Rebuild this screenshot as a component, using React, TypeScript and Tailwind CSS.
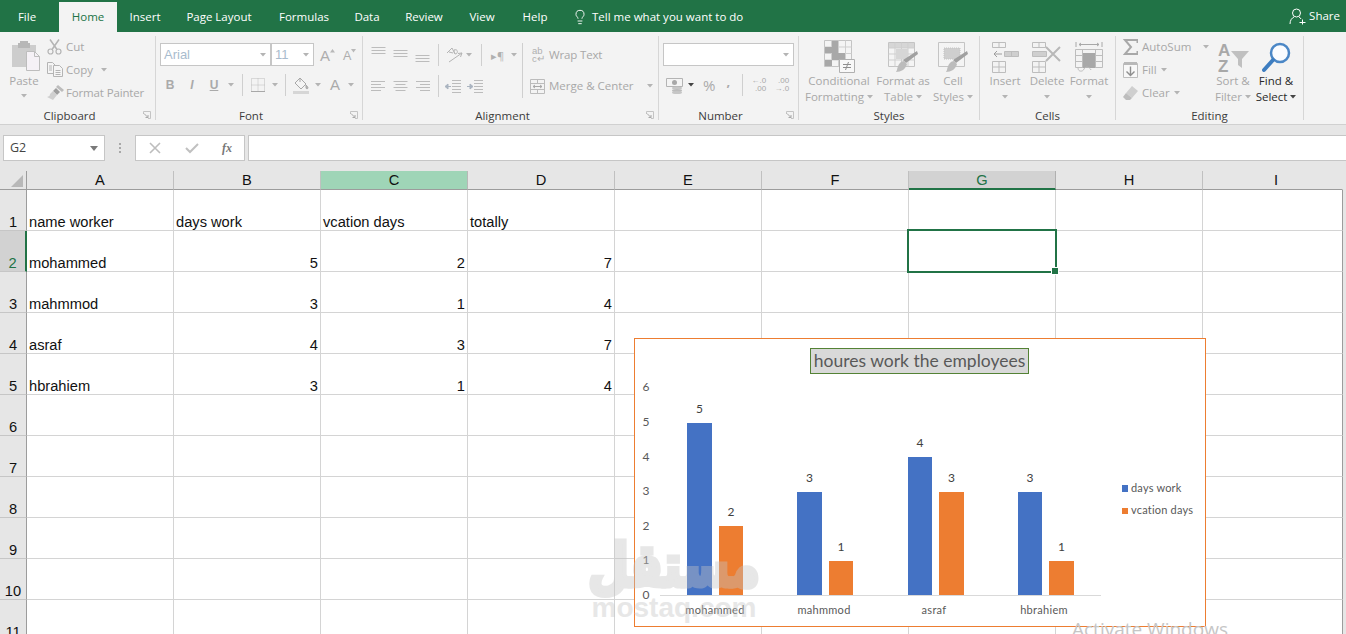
import React from "react";
import { Lightbulb } from "lucide-react";

const COLS = ["A", "B", "C", "D", "E", "F", "G", "H", "I"];
const ROWS: (string | number)[][] = [
  ["name worker", "days work", "vcation days", "totally"],
  ["mohammed", 5, 2, 7],
  ["mahmmod", 3, 1, 4],
  ["asraf", 4, 3, 7],
  ["hbrahiem", 3, 1, 4],
  [],
  [],
  [],
  [],
  [],
  [],
];
const TABS = [
  { label: "File", w: "w-[59px] pr-[5px]" },
  { label: "Home", w: "w-[58px]" },
  { label: "Insert", w: "w-[56px]" },
  { label: "Page Layout", w: "w-[92px]" },
  { label: "Formulas", w: "w-[78px]" },
  { label: "Data", w: "w-[48px]" },
  { label: "Review", w: "w-[66px]" },
  { label: "View", w: "w-[50px]" },
  { label: "Help", w: "w-[56px]" },
];
const G = "#bcbcbc";

function Caret({ dark }: { dark?: boolean }) {
  return (
    <svg width="6" height="4" viewBox="0 0 6 4" className="shrink-0">
      <path d="M0 0h6L3 3.5z" fill={dark ? "#444" : "#b4b4b4"} />
    </svg>
  );
}

function Sep({ h = "h-[22px]" }: { h?: string }) {
  return <div className={`w-px bg-[#cfcfcf] shrink-0 ${h}`} />;
}

function Launcher() {
  return (
    <svg width="8" height="8" viewBox="0 0 8 8" className="absolute right-[4px] top-[1px]">
      <path d="M.5 3V.5H7.5V7.5H5" fill="none" stroke="#c4c4c4" />
      <path d="M1 2.5 5 6.5M5 4v2.5H2.5" fill="none" stroke="#a8a8a8" />
    </svg>
  );
}

function Group({ w, label, launcher, children }: { w: string; label: string; launcher?: boolean; children: React.ReactNode }) {
  return (
    <div className={`${w} shrink-0 h-[84px] mt-[4px] border-r border-[#d6d6d6] flex flex-col`}>
      <div className="h-[73px] shrink-0">{children}</div>
      <div className={`relative h-[12px] shrink-0 mt-px flex items-center justify-center text-[11.5px] leading-[12px] text-[#3c3c3c] ${launcher ? "pr-[16px]" : ""}`}>
        {label}
        {launcher && <Launcher />}
      </div>
    </div>
  );
}

function Lines({ y, w }: { y: number[]; w: number[] }) {
  return (
    <svg width="15" height="16" viewBox="0 0 15 16" className="shrink-0">
      {y.map((v, i) => (
        <path key={i} d={`M${(15 - w[i]) / 2} ${v + 0.5}h${w[i]}`} stroke={G} />
      ))}
    </svg>
  );
}

function AlignLines({ kind }: { kind: "l" | "c" | "r" }) {
  const ws = [14, 10, 14, 10];
  return (
    <svg width="15" height="14" viewBox="0 0 15 14" className="shrink-0">
      {ws.map((n, i) => {
        const x = kind === "l" ? 0 : kind === "c" ? (15 - n) / 2 : 15 - n;
        return <path key={i} d={`M${x} ${2.5 + i * 3}h${n}`} stroke={G} />;
      })}
    </svg>
  );
}

function Indent({ flip }: { flip?: boolean }) {
  return (
    <svg width="16" height="14" viewBox="0 0 16 14" className="shrink-0">
      <path d="M7 1.500h9M7 4.500h9M7 7.500h9M7 10.500h9M7 13.500h9" stroke={G} />
      {flip ? <path d="M0 7.500h3V5l3 2.500L3 10V7.500" fill="#aab4c0" stroke="#aab4c0" /> : <path d="M6 7.500H3V5L0 7.500 3 10V7.500" fill="#aab4c0" stroke="#aab4c0" />}
    </svg>
  );
}

function PasteIcon() {
  return (
    <svg width="29" height="31" viewBox="0 0 29 31">
      <path d="M1 5h24v22H1z" fill="#cdcdcd" />
      <path d="M9 3h8V1h-8zM7 3h12v5H7z" fill="#b7b7b7" />
      <path d="M15.500 11.500h8l5 5v14h-13z" fill="#f5f1f6" stroke="#bdbdbd" />
      <path d="M23.500 11.500v5h5" fill="none" stroke="#bdbdbd" />
    </svg>
  );
}

function CutIcon() {
  return (
    <svg width="15" height="16" viewBox="0 0 15 16" fill="none" stroke="#b4b4b4" strokeWidth="1.2">
      <circle cx="3.500" cy="12.500" r="2.500" />
      <circle cx="11.500" cy="12.500" r="2.500" />
      <path d="M5 10.500 12 .5M10 10.500 3 .5" strokeWidth="1.500" />
    </svg>
  );
}

function CopyIcon() {
  return (
    <svg width="16" height="15" viewBox="0 0 16 15" fill="#f5f5f5" stroke="#b4b4b4">
      <path d="M.5.500h5l3 3v8h-8z" />
      <path d="M6.500 3.500h6l3 3v8h-9z" />
      <path d="M2 4h3M2 6h3M2 8h3M8.500 8.500h5M8.500 10.500h5M8.500 12.500h5" />
    </svg>
  );
}

function PainterIcon() {
  return (
    <svg width="17" height="15" viewBox="0 0 17 15">
      <path d="M11 0l6 5-2 2-6-5z" fill="#bcbcbc" />
      <path d="M9 3l4 4-3 3-4-4z" fill="#9e9e9e" />
      <path d="M6 6l4 4-4 5-6-3c2-1 3-1 3-3z" fill="#cfcfcf" />
    </svg>
  );
}

function BigA({ up }: { up: boolean }) {
  return (
    <span className="relative flex items-end h-[16px]">
      <span className={`font-['Liberation_Sans',sans-serif] ${up ? "text-[15px]" : "text-[12.5px]"} leading-[14px] text-[#adadad]`}>A</span>
      <svg width="6" height="4" viewBox="0 0 6 4" className="mb-[10px]">
        <path d={up ? "M0 3.500h5L2.500 0z" : "M0 0h5L2.500 3.500z"} fill="#b8b8b8" />
      </svg>
    </span>
  );
}

function InputBox({ w, text }: { w: string; text?: string }) {
  return (
    <div className={`${w} h-[23px] bg-white border border-[#c6c6c6] flex items-center justify-between pl-[3px] pr-[4px] shrink-0`}>
      <span className="font-['Liberation_Sans',sans-serif] text-[13px] text-[#a8bbcd]">{text}</span>
      <Caret />
    </div>
  );
}

function GridIcon() {
  return (
    <svg width="14" height="14" viewBox="0 0 14 14" fill="none">
      <path d="M.5.500h13v13H.5zM7 .5v13M.5 7h13" stroke="#bdbdbd" strokeDasharray="1 1" />
      <path d="M0 13.500h14" stroke="#a8a8a8" />
    </svg>
  );
}

function FillIcon() {
  return (
    <svg width="16" height="17" viewBox="0 0 16 17">
      <path d="M7 1l6 6-5 5-6-6z" fill="#f4f4f4" stroke="#a8a8a8" />
      <path d="M7 1v4M13 8c1 1 2 2 2 3s-2 1-2 0z" stroke="#a8a8a8" fill="#b4b4b4" />
      <path d="M0 14h16v3H0z" fill="#d6d6d6" />
    </svg>
  );
}

function OrientIcon() {
  return (
    <svg width="17" height="16" viewBox="0 0 17 16" fill="none" stroke="#b4b4b4">
      <path d="M1 6l5-5 3 6M3 5l4 1" />
      <path d="M8 3c3-1 4 1 3 3s-3 1-3-3M3 15 16 6M16 6l-4 .5M16 6l-1.500 4" />
    </svg>
  );
}

function WrapIcon() {
  return (
    <span className="w-[13px] text-[9.5px] leading-[8px] text-[#b0b0b0] font-['Liberation_Sans',sans-serif] flex flex-col">
      <span>ab</span>
      <span>c↵</span>
    </span>
  );
}

function MergeIcon() {
  return (
    <svg width="15" height="15" viewBox="0 0 15 15" fill="none" stroke="#bcbcbc">
      <path d="M.5.500h14v14H.5zM.5 4.500h14M.5 10.500h14M7.500.5v4M7.500 10.500v4" />
      <path d="M3 7.500h9M3 7.500l2-1.500M3 7.500 5 9M12 7.500 10 6M12 7.500 10 9" stroke="#a8a8a8" />
    </svg>
  );
}

function MoneyIcon() {
  return (
    <svg width="18" height="17" viewBox="0 0 18 17">
      <path d="M.5 1.500h16v8H.5z" fill="#f4f4f4" stroke="#b4b4b4" />
      <circle cx="8.500" cy="5.500" r="2.500" fill="#a8a8a8" />
      <ellipse cx="11" cy="11" rx="5" ry="1.500" fill="#c6c6c6" />
      <ellipse cx="11" cy="13.500" rx="5" ry="1.500" fill="#bbb" />
      <ellipse cx="11" cy="15.500" rx="5" ry="1.500" fill="#c6c6c6" />
    </svg>
  );
}

function DecimalIcon({ inc }: { inc: boolean }) {
  return (
    <span className="relative flex w-[16px] flex-col items-end text-[8px] leading-[8px] text-[#a8a8a8] font-['Liberation_Sans',sans-serif]">
      <span>{inc ? "←.0" : ".00"}</span>
      <span>{inc ? ".00" : "→.0"}</span>
    </span>
  );
}

function CondIcon() {
  return (
    <svg width="31" height="33" viewBox="0 0 31 33" fill="none">
      <path d="M.5.500h27v26H.5z" fill="#f4f4f4" stroke="#c4c4c4" />
      <path d="M7.500.5v26M14.500.5v26M21.500.5v26M.5 7h27M.5 13.500h27M.5 20h27" stroke="#cfcfcf" />
      <path d="M8 1h6v6H8zM1 7h13v6H1zM8 13h13v7H8zM1 20h7v6H1z" fill="#a8a8a8" />
      <path d="M15.500 19.500h15v13h-15z" fill="#f8f8f8" stroke="#b0b0b0" />
      <path d="M19 24.500h8M19 27.500h8M24.500 22l-3 8" stroke="#8e8e8e" />
    </svg>
  );
}

function TableBrushIcon({ header }: { header?: boolean }) {
  return (
    <svg width="30" height="31" viewBox="0 0 30 31" fill="none">
      <path d="M.5.500h26v24H.5z" fill="#f4f4f4" stroke="#c4c4c4" />
      {header ? (
        <path d="M6 6h16v11H6z" fill="#cfcfcf" stroke="#c4c4c4" strokeDasharray="1 1" />
      ) : (
        <>
          <path d="M1 1h25v5H1z" fill="#d6d6d6" />
          <path d="M7 .5v24M13.500.5v24M20 .5v24M.5 6h26M.5 12h26M.5 18h26" stroke="#cfcfcf" />
          <path d="M8 7h12v10H8z" fill="#d6d6d6" />
        </>
      )}
      <path d="M29 9l1 3-12 9-3-3z" fill="#a0a0a0" />
      <path d="M16 19c-3 0-6 3-7 9l-1 2c5 0 10-3 11-8z" fill="#bcbcbc" />
    </svg>
  );
}

function InsertIcon() {
  return (
    <svg width="27" height="31" viewBox="0 0 27 31" fill="none" stroke="#bdbdbd">
      <path d="M.5.500h13v5H.5zM7 .5v5M.5 19.500h13v11H.5zM7 19.500v11M.5 25h13" />
      <path d="M12.500 9.500h14v5h-14zM19.500 9.500v5" fill="#cfcfcf" />
      <path d="M2 12h8M2 12l3-3M2 12l3 3" stroke="#9e9e9e" />
    </svg>
  );
}

function DeleteIcon() {
  return (
    <svg width="30" height="31" viewBox="0 0 30 31" fill="none" stroke="#bdbdbd">
      <path d="M.5.500h13v5H.5zM7 .5v5M.5 19.500h13v11H.5zM7 19.500v11M.5 25h13" />
      <path d="M.5 9.500h14v5H.5z" fill="#cfcfcf" />
      <path d="M14 5l14 14M28 5 14 19" strokeWidth="2" stroke="#b8b8b8" />
    </svg>
  );
}

function FormatIcon() {
  return (
    <svg width="28" height="32" viewBox="0 0 28 32" fill="none" stroke="#bdbdbd">
      <path d="M1 1v5M27 1v5M4 3.500h20M4 3.500l2-1.500M4 3.500 6 5M24 3.500 22 2M24 3.500 22 5" stroke="#a8a8a8" />
      <path d="M.5 8.500h27v18H.5zM7.500 8.500v18M20.500 8.500v18M.5 14.500h27M.5 20.500h27" />
      <path d="M8 12h12v15H8z" fill="#a8a8a8" stroke="none" />
      <path d="M3 27c0 4 5 4 6 1s6-2 7 1" />
    </svg>
  );
}

function SigmaIcon() {
  return (
    <svg width="15" height="16" viewBox="0 0 15 16" fill="none">
      <path d="M14.500 4V1H2l6 7-6 7h12.500v-3" stroke="#a8a8a8" strokeWidth="2" />
    </svg>
  );
}

function FillDownIcon() {
  return (
    <svg width="15" height="17" viewBox="0 0 15 17" fill="none">
      <path d="M.5 2.500h14v14H.5z" fill="#f8f8f8" stroke="#bdbdbd" />
      <path d="M1 1h13v3H1z" fill="#b8b8b8" />
      <path d="M7.500 5.500v9M3.500 10.500l4 4 4-4" stroke="#8f8f8f" strokeWidth="1.400" />
    </svg>
  );
}

function EraserIcon() {
  return (
    <svg width="15" height="14" viewBox="0 0 15 14">
      <path d="M9 0l6 5-6 7-6-5z" fill="#cfcfcf" />
      <path d="M3 7l6 5-2 2H3L0 11z" fill="#bdbdbd" />
    </svg>
  );
}

function SortIcon() {
  return (
    <svg width="31" height="31" viewBox="0 0 31 31">
      <text x="0" y="14" fontSize="17" fontWeight="700" fill="#a8a8a8" className="font-['Liberation_Sans',sans-serif]">A</text>
      <text x="0" y="30" fontSize="17" fontWeight="700" fill="#a8a8a8" className="font-['Liberation_Sans',sans-serif]">Z</text>
      <path d="M13 9h18l-7 8v9l-4-3v-6z" fill="#c0c0c0" />
    </svg>
  );
}

function FindIcon() {
  return (
    <svg width="29" height="31" viewBox="0 0 29 31" fill="none">
      <circle cx="18" cy="11" r="9" stroke="#4b87c6" strokeWidth="2.500" fill="#fafcff" />
      <path d="M11 18 2 28" stroke="#3d7dc0" strokeWidth="4" strokeLinecap="round" />
    </svg>
  );
}

function ShareIcon() {
  return (
    <svg width="17" height="17" viewBox="0 0 17 17" fill="none" stroke="white">
      <circle cx="7.500" cy="5" r="4" />
      <path d="M1 16c0-4 2-6 4-7M10 9c1 .5 1.500 1 2 2M10.500 14.500h6M13.500 11.500v5" />
    </svg>
  );
}

function BigButton({ w, icon, lines, caretLine, dark }: { w: string; icon: React.ReactNode; lines: string[]; caretLine?: boolean; dark?: boolean }) {
  return (
    <div className={`${w} shrink-0 flex flex-col items-center leading-[16px] text-[11.5px] ${dark ? "text-[#2a2a2a]" : "text-[#a8a8a8]"}`}>
      <div className="h-[37px] flex items-end justify-center">{icon}</div>
      {lines.map((t, i) => (
        <div key={t} className="flex items-center gap-[3px] whitespace-nowrap">
          {t}
          {caretLine && i === lines.length - 1 && <Caret dark={dark} />}
        </div>
      ))}
      {!caretLine && (
        <div className="h-[16px] flex items-center">
          <Caret />
        </div>
      )}
    </div>
  );
}

function Ribbon() {
  return (
    <div className="h-[93px] bg-[#f3f3f3] border-b border-[#d0d0d0] flex shrink-0">
      <Group w="w-[156px]" label="Clipboard" launcher>
        <div className="flex pl-[8px] text-[11.5px] text-[#a8a8a8]">
          <div className="w-[32px] flex flex-col items-center">
            <div className="pt-[4px] pl-[2px]">
              <PasteIcon />
            </div>
            <div className="leading-[16px] mt-[2px]">Paste</div>
            <div className="h-[14px] flex items-center">
              <Caret />
            </div>
          </div>
          <div className="ml-[7px] flex flex-col -mt-px">
            <div className="h-[23px] flex items-center gap-[3px]">
              <span className="w-[16px]"><CutIcon /></span>Cut
            </div>
            <div className="h-[23px] flex items-center gap-[3px]">
              <span className="w-[16px]"><CopyIcon /></span>Copy<span className="ml-[5px]"><Caret /></span>
            </div>
            <div className="h-[23px] flex items-center gap-[3px] whitespace-nowrap tracking-[-0.15px]">
              <span className="w-[16px]"><PainterIcon /></span>Format Painter
            </div>
          </div>
        </div>
      </Group>

      <Group w="w-[207px]" label="Font" launcher>
        <div className="pl-[4px] pt-[7px]">
          <div className="flex items-center">
            <InputBox w="w-[111px]" text="Arial" />
            <InputBox w="w-[43px]" text="11" />
            <span className="ml-[6px] w-[23px]"><BigA up /></span>
            <BigA up={false} />
          </div>
          <div className="flex items-center h-[22px] mt-[8px] text-[#aaa] font-['Liberation_Sans',sans-serif]">
            <span className="w-[20px] text-center text-[12px] font-bold">B</span>
            <span className="w-[24px] text-center text-[12px] italic font-bold">I</span>
            <span className="w-[20px] text-center text-[12px] underline font-bold">U</span>
            <span className="w-[13px] flex justify-center"><Caret /></span>
            <span className="ml-[5px]"><Sep /></span>
            <span className="ml-[8px]"><GridIcon /></span>
            <span className="w-[20px] flex justify-center"><Caret /></span>
            <Sep />
            <span className="ml-[7px]"><FillIcon /></span>
            <span className="w-[17px] flex justify-center"><Caret /></span>
            <span className="w-[18px] text-center text-[15px]">A</span>
            <span className="w-[14px] flex justify-center"><Caret /></span>
          </div>
        </div>
      </Group>

      <Group w="w-[296px]" label="Alignment" launcher>
        <div className="flex pl-[8px] pt-[7px] text-[11.5px] text-[#a8a8a8]">
          <div className="w-[151px] shrink-0 flex flex-col gap-[8px]">
            <div className="flex items-center h-[24px]">
              <Lines y={[0, 3, 6]} w={[14, 14, 14]} />
              <span className="ml-[7px]"><Lines y={[3, 6, 9]} w={[14, 14, 14]} /></span>
              <span className="ml-[7px]"><Lines y={[8, 11, 14]} w={[14, 14, 14]} /></span>
              <span className="ml-[8px]"><Sep /></span>
              <span className="ml-[7px]"><OrientIcon /></span>
              <span className="ml-[3px]"><Caret /></span>
              <span className="ml-[9px]"><Sep /></span>
              <span className="ml-[9px] text-[11px] leading-none text-[#b0b0b0]">▸¶</span>
              <span className="ml-[7px]"><Caret /></span>
            </div>
            <div className="flex items-center h-[22px]">
              <AlignLines kind="l" />
              <span className="ml-[7px]"><AlignLines kind="c" /></span>
              <span className="ml-[7px]"><AlignLines kind="r" /></span>
              <span className="ml-[8px]"><Sep /></span>
              <span className="ml-[6px]"><Indent /></span>
              <span className="ml-[6px]"><Indent flip /></span>
            </div>
          </div>
          <Sep h="h-[55px]" />
          <div className="ml-[7px] flex flex-col gap-[8px]">
            <div className="flex items-center h-[24px] pl-[2px] gap-[4px] tracking-[-0.15px]"><WrapIcon />Wrap Text</div>
            <div className="flex items-center h-[22px] gap-[4px] whitespace-nowrap">
              <MergeIcon />Merge &amp; Center<span className="ml-[9px]"><Caret /></span>
            </div>
          </div>
        </div>
      </Group>

      <Group w="w-[140px]" label="Number" launcher>
        <div className="pl-[4px] pt-[7px]">
          <InputBox w="w-[131px]" />
          <div className="flex items-center h-[22px] mt-[8px] text-[#aaa]">
            <span className="ml-[3px]"><MoneyIcon /></span>
            <span className="ml-[4px]"><Caret dark /></span>
            <span className="ml-[9px] text-[15px] leading-none">%</span>
            <span className="ml-[11px] mb-[8px] text-[13px] font-bold leading-none">,</span>
            <span className="ml-[12px]"><Sep /></span>
            <span className="ml-[7px]"><DecimalIcon inc /></span>
            <span className="ml-[7px]"><DecimalIcon inc={false} /></span>
          </div>
        </div>
      </Group>

      <Group w="w-[181px]" label="Styles">
        <div className="flex pl-px">
          <BigButton w="w-[78px]" icon={<CondIcon />} lines={["Conditional", "Formatting"]} caretLine />
          <BigButton w="w-[50px]" icon={<TableBrushIcon />} lines={["Format as", "Table"]} caretLine />
          <BigButton w="w-[50px]" icon={<TableBrushIcon header />} lines={["Cell", "Styles"]} caretLine />
        </div>
      </Group>

      <Group w="w-[136px]" label="Cells">
        <div className="flex pl-[4px]">
          <BigButton w="w-[42px]" icon={<InsertIcon />} lines={["Insert"]} />
          <BigButton w="w-[42px]" icon={<DeleteIcon />} lines={["Delete"]} />
          <BigButton w="w-[42px]" icon={<FormatIcon />} lines={["Format"]} />
        </div>
      </Group>

      <Group w="w-[188px]" label="Editing">
        <div className="flex pl-[7px]">
          <div className="w-[90px] shrink-0 text-[11.5px] text-[#a8a8a8] -mt-px">
            <div className="h-[23px] flex items-center gap-[4px]">
              <SigmaIcon />AutoSum<span className="ml-[8px]"><Caret /></span>
            </div>
            <div className="h-[23px] flex items-center gap-[4px]">
              <FillDownIcon />Fill<Caret />
            </div>
            <div className="h-[23px] flex items-center gap-[4px]">
              <EraserIcon />Clear<Caret />
            </div>
          </div>
          <BigButton w="w-[40px]" icon={<SortIcon />} lines={["Sort &", "Filter"]} caretLine />
          <span className="w-[3px]" />
          <BigButton w="w-[40px]" icon={<FindIcon />} lines={["Find &", "Select"]} caretLine dark />
        </div>
      </Group>
    </div>
  );
}

function FormulaBar() {
  return (
    <div className="h-[46px] shrink-0 pt-[10px] pl-[3px] flex items-start">
      <div className="w-[102px] h-[26px] bg-white border border-[#c6c6c6] flex items-center justify-between pl-[6px] pr-[6px] text-[12.5px] text-[#444]">
        G2
        <svg width="8" height="5" viewBox="0 0 8 5"><path d="M0 0h8L4 5z" fill="#7a7a7a" /></svg>
      </div>
      <div className="w-[30px] h-[26px] flex flex-col items-center justify-center gap-[2px]">
        <i className="w-[2px] h-[2px] bg-[#a8a8a8]" />
        <i className="w-[2px] h-[2px] bg-[#a8a8a8]" />
        <i className="w-[2px] h-[2px] bg-[#a8a8a8]" />
      </div>
      <div className="w-[110px] h-[26px] bg-white border border-[#c6c6c6] flex items-center">
        <svg width="12" height="12" viewBox="0 0 12 12" className="ml-[13px]" fill="none" stroke="#bdbdbd" strokeWidth="1.600"><path d="M1 1l10 10M11 1 1 11" /></svg>
        <svg width="14" height="11" viewBox="0 0 14 11" className="ml-[24px]" fill="none" stroke="#c0c0c0" strokeWidth="2"><path d="M1 5l4 4 8-8" /></svg>
        <span className="ml-[23px] font-['Liberation_Serif',serif] italic font-bold text-[12px] text-[#777]">fx</span>
      </div>
      <div className="ml-[3px] flex-1 h-[26px] bg-white border border-[#c6c6c6] border-r-0" />
    </div>
  );
}

function Sheet() {
  return (
    <div className="relative font-['Liberation_Sans',sans-serif] text-[14.67px] text-[#111]">
      <div className="grid grid-cols-[27px_repeat(8,147px)_140px] w-[1343px]">
        <div className="h-[19px] relative flex justify-end items-end pb-[2px] pr-[3px] border-r border-b border-[#9c9c9c]">
          <svg width="12" height="12" viewBox="0 0 12 12"><path d="M12 0v12H0z" fill="#b8b8b8" /></svg>
        </div>
        {COLS.map((c) => (
          <div
            key={c}
            className={`h-[19px] pt-px flex items-center justify-center border-r border-b leading-none ${
              c === "C"
                ? "bg-[#9fd5b7] border-r-[#b8b8b8] border-b-[#9c9c9c]"
                : c === "G"
                  ? "bg-[#d2d2d2] text-[#217346] border-r-[#b0b0b0] border-b-2 border-b-[#217346]"
                  : c === "I"
                    ? "pl-[7px] border-r-transparent border-b-[#9c9c9c]"
                    : "border-r-[#c0c0c0] border-b-[#9c9c9c]"
            }`}
          >
            {c}
          </div>
        ))}
        {ROWS.map((row, r) => (
          <React.Fragment key={r}>
            <div
              className={`h-[41px] flex items-end justify-center border-b leading-[15px] ${
                r === 1
                  ? "bg-[#d2d2d2] text-[#217346] border-b-[#c6c6c6] border-r-2 border-r-[#217346]"
                  : "border-r border-r-[#9c9c9c] border-b-[#c6c6c6]"
              }`}
            >
              {r + 1}
            </div>
            {COLS.map((c, i) => {
              const v = row[i];
              const selected = r === 1 && c === "G";
              return (
                <div
                  key={c}
                  className={`relative h-[41px] bg-white border-b border-b-[#d4d4d4] flex items-end px-[2px] leading-[15px] border-r ${
                    c === "I" ? "border-r-[#9c9c9c]" : "border-r-[#d4d4d4]"
                  } ${typeof v === "number" ? "justify-end" : "justify-start"}`}
                >
                  {v}
                  {selected && (
                    <div className="absolute z-10 -left-[2px] -top-[2px] w-[150px] h-[44px] border-2 border-[#217346]">
                      <div className="absolute -right-[3px] -bottom-[3px] w-[6px] h-[6px] bg-[#217346] outline outline-1 outline-white" />
                    </div>
                  )}
                </div>
              );
            })}
          </React.Fragment>
        ))}
      </div>
    </div>
  );
}

const BARS = [
  { x: 687, w: 25, v: 5, c: "#4472c4" },
  { x: 719, w: 24, v: 2, c: "#ed7d31" },
  { x: 797, w: 25, v: 3, c: "#4472c4" },
  { x: 829, w: 24, v: 1, c: "#ed7d31" },
  { x: 908, w: 24, v: 4, c: "#4472c4" },
  { x: 939, w: 25, v: 3, c: "#ed7d31" },
  { x: 1018, w: 24, v: 3, c: "#4472c4" },
  { x: 1049, w: 25, v: 1, c: "#ed7d31" },
];
const TICK_Y = [595, 560, 526, 491, 457, 422, 387];
const BAR_TOP: Record<number, number> = { 5: 423, 4: 457, 3: 492, 2: 526, 1: 561 };
const NAMES = [
  { t: "mohammed", x: 715 },
  { t: "mahmmod", x: 824 },
  { t: "asraf", x: 934 },
  { t: "hbrahiem", x: 1044 },
];

function Chart() {
  return (
    <svg
      width="572"
      height="289"
      viewBox="634 338 572 289"
      className="absolute z-20 left-[634px] top-[338px] font-['Lato',sans-serif]"
    >
      <rect x="634.5" y="338.5" width="571" height="288" fill="white" stroke="#ed7d31" />
      <rect x="810.5" y="348.5" width="218" height="25" fill="#d9d9d9" stroke="#548235" />
      <text x="919.5" y="367" textAnchor="middle" fontSize="17.5" fill="#595959">houres work the employees</text>
      <path d="M660 595.500h441" stroke="#d9d9d9" />
      {TICK_Y.map((y, i) => (
        <text key={i} x="646" y={y + 4} textAnchor="middle" fontSize="12" fill="#595959">{i}</text>
      ))}
      {BARS.map((b) => (
        <g key={b.x}>
          <rect x={b.x} y={BAR_TOP[b.v]} width={b.w} height={595 - BAR_TOP[b.v]} fill={b.c} />
          <text x={b.x + b.w / 2} y={BAR_TOP[b.v] - 10} textAnchor="middle" fontSize="12" fill="#404040">{b.v}</text>
        </g>
      ))}
      {NAMES.map((n) => (
        <text key={n.t} x={n.x} y="614" textAnchor="middle" fontSize="11" letterSpacing=".3" fill="#595959">{n.t}</text>
      ))}
      <rect x="1122" y="485" width="6" height="7" fill="#4472c4" />
      <text x="1131" y="492" fontSize="11" letterSpacing=".2" fill="#595959">days work</text>
      <rect x="1122" y="508" width="6" height="6" fill="#ed7d31" />
      <text x="1131" y="514" fontSize="11" letterSpacing=".2" fill="#595959">vcation days</text>
    </svg>
  );
}

export default function App() {
  return (
    <div className="relative w-[1346px] h-[634px] overflow-hidden bg-[#e6e6e6] flex flex-col font-['Open_Sans',sans-serif]">
      <div className="h-[32px] shrink-0 bg-[#217346] flex text-white text-[11.5px]">
        {TABS.map((t) => (
          <div
            key={t.label}
            className={`${t.w} flex items-center justify-center ${t.label === "Home" ? "bg-[#f3f3f3] text-[#217346] mt-[2px] pb-[1px]" : "pt-[2px]"}`}
          >
            {t.label}
          </div>
        ))}
        <div className="ml-[9px] pt-[1px] flex items-center gap-[4px]">
          <Lightbulb size={16} strokeWidth={1.4} />
          Tell me what you want to do
        </div>
        <div className="ml-auto pr-[6px] flex items-center gap-[3px]">
          <ShareIcon />
          Share
        </div>
      </div>
      <Ribbon />
      <FormulaBar />
      <Sheet />
      <Chart />
      <div className="absolute z-30 left-[590px] top-[530px] w-[168px] flex flex-col items-center opacity-40 pointer-events-none text-[#c4c4c4] leading-none">
        <span dir="rtl" className="font-['DejaVu_Sans',sans-serif] font-bold text-[47px] leading-[72px] scale-y-125 [-webkit-text-stroke:4px_#c4c4c4]">مستقل</span>
        <span className="font-['Liberation_Sans',sans-serif] text-[28px] font-bold leading-[22px] -mt-[5px]">mostaq.com</span>
      </div>
      <div className="absolute z-30 left-[1072px] top-[617px] text-[19px] leading-[24px] text-[#c6c6c6]">Activate Windows</div>
    </div>
  );
}
